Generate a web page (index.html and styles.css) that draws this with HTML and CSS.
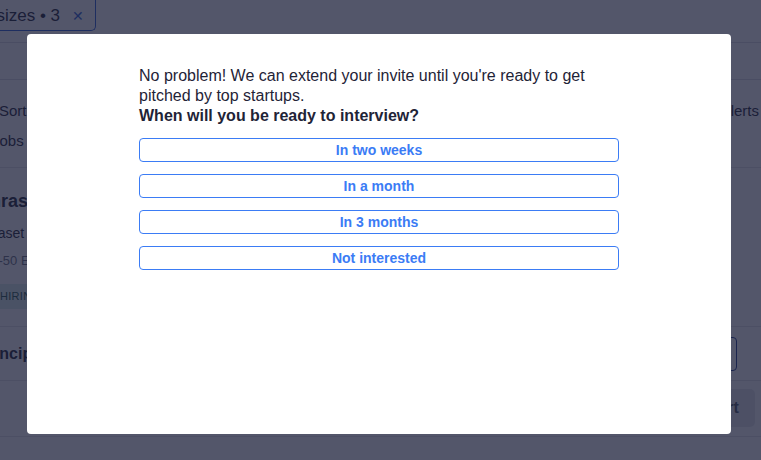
FILE: index.html
```html
<!DOCTYPE html>
<html lang="en">
<head>
<meta charset="utf-8">
<title>Extend invite</title>
<link rel="stylesheet" href="styles.css">
</head>
<body>
<div class="page">
  <div class="filters">
    <div class="chip"><span class="chip-label">Company sizes • 3</span><span class="chip-x">✕</span></div>
  </div>
  <div class="subbar"></div>
  <div class="listhead">
    <div class="sortrow">
      <span class="sort">Sort by: Recommended</span>
      <span class="alerts">Job alerts</span>
    </div>
    <div class="count">Jobs that match your preferences</div>
  </div>
  <div class="card">
    <div class="card-title">Phrase</div>
    <div class="card-desc">Dataset management for machine learning</div>
    <div class="card-meta">11-50 Employees</div>
    <div class="tag">ACTIVELY HIRING</div>
  </div>
  <div class="role">
    <span class="role-title">Principal Engineer</span>
    <span class="role-btn">Apply</span>
  </div>
  <div class="actions">
    <span class="gray-btn">Report</span>
  </div>
</div>

<div class="overlay">
  <div class="modal">
    <div class="modal-body">
      <p class="intro">No problem! We can extend your invite until you're ready to get pitched by top startups.<br><strong>When will you be ready to interview?</strong></p>
      <div class="options">
        <button class="opt">In two weeks</button>
        <button class="opt">In a month</button>
        <button class="opt">In 3 months</button>
        <button class="opt">Not interested</button>
      </div>
    </div>
  </div>
</div>
</body>
</html>
```

FILE: styles.css
```css
* { box-sizing: border-box; }
html, body { margin: 0; padding: 0; }
body {
  width: 761px;
  height: 460px;
  overflow: hidden;
  background: #ffffff;
  font-family: "Liberation Sans", Arial, Helvetica, sans-serif;
  color: #1f2437;
}

.page { width: 761px; }

.filters {
  height: 43px;
  border-bottom: 1px solid #d9dce3;
}
.chip {
  display: inline-flex;
  align-items: center;
  gap: 12px;
  height: 33px;
  margin-left: -92px;
  margin-top: -2px;
  padding: 4px 11px 0 10px;
  border: 1px solid #2f5fd6;
  border-top: none;
  border-radius: 0 0 5px 5px;
  font-size: 17px;
  color: #1f2437;
}
.chip-x { color: #2f5fd6; font-size: 14px; }

.subbar {
  height: 37px;
  border-bottom: 1px solid #d9dce3;
}

.listhead {
  height: 88px;
  border-bottom: 1px solid #e1e3e8;
  padding-top: 22px;
}
.sortrow {
  display: flex;
  justify-content: space-between;
  font-size: 15px;
  line-height: 18px;
}
.sort { margin-left: -1px; }
.alerts { margin-right: 2px; }
.count {
  margin-top: 12px;
  margin-left: -8px;
  font-size: 15px;
  line-height: 18px;
}

.card {
  height: 159px;
  padding-top: 22px;
  margin-left: -22px;
  border-bottom: 1px solid #e1e3e8;
}
.card-title { font-size: 18px; font-weight: bold; line-height: 22px; }
.card-desc { margin-top: 12px; font-size: 14px; line-height: 18px; margin-left: -2px; }
.card-meta { margin-top: 11px; font-size: 13px; line-height: 16px; color: #6b7280; margin-left: 7px; }
.tag {
  display: inline-block;
  margin-top: 15px;
  margin-left: -44px;
  padding: 6px 8px;
  font-size: 11px;
  line-height: 13px;
  letter-spacing: 0.3px;
  background: #dbeee9;
  color: #2b5a4e;
}

.role {
  height: 54px;
  display: flex;
  align-items: center;
  justify-content: space-between;
  border-bottom: 1px solid #e1e3e8;
}
.role-title { font-size: 16px; font-weight: bold; margin-left: -22px; }
.role-btn {
  width: 80px;
  height: 34px;
  margin-right: 24px;
  border: 1px solid #1e3a8a;
  border-radius: 4px;
  display: flex;
  align-items: center;
  justify-content: center;
  font-size: 14px;
  font-weight: bold;
  color: #1e3a8a;
}

.actions {
  height: 56px;
  display: flex;
  align-items: flex-start;
  justify-content: flex-end;
  padding-top: 8px;
  border-bottom: 1px solid #e1e3e8;
}
.gray-btn {
  width: 84px;
  height: 38px;
  margin-right: 6px;
  border-radius: 5px;
  background: #e6e8ec;
  display: flex;
  align-items: center;
  justify-content: center;
  font-size: 16px;
  font-weight: bold;
  color: #4b5563;
}

.overlay {
  position: fixed;
  inset: 0;
  background: rgba(26, 30, 56, 0.75);
  padding: 34px 0 0 27px;
}
.modal {
  width: 704px;
  height: 400px;
  background: #ffffff;
  border-radius: 4px;
  padding-top: 32px;
}
.modal-body {
  width: 480px;
  margin: 0 auto;
}
.intro {
  margin: 0;
  font-size: 16px;
  line-height: 20px;
  color: #1f2437;
}
.intro strong { font-weight: bold; }
.options {
  margin-top: 12px;
  display: flex;
  flex-direction: column;
  gap: 12px;
}
.opt {
  display: block;
  width: 100%;
  height: 24px;
  padding: 0;
  margin: 0;
  background: #ffffff;
  border: 1px solid #3b7cf5;
  border-radius: 4px;
  font-family: "Liberation Sans", Arial, Helvetica, sans-serif;
  font-size: 14px;
  font-weight: bold;
  line-height: 22px;
  color: #3b7cf5;
  text-align: center;
  cursor: pointer;
}
```
